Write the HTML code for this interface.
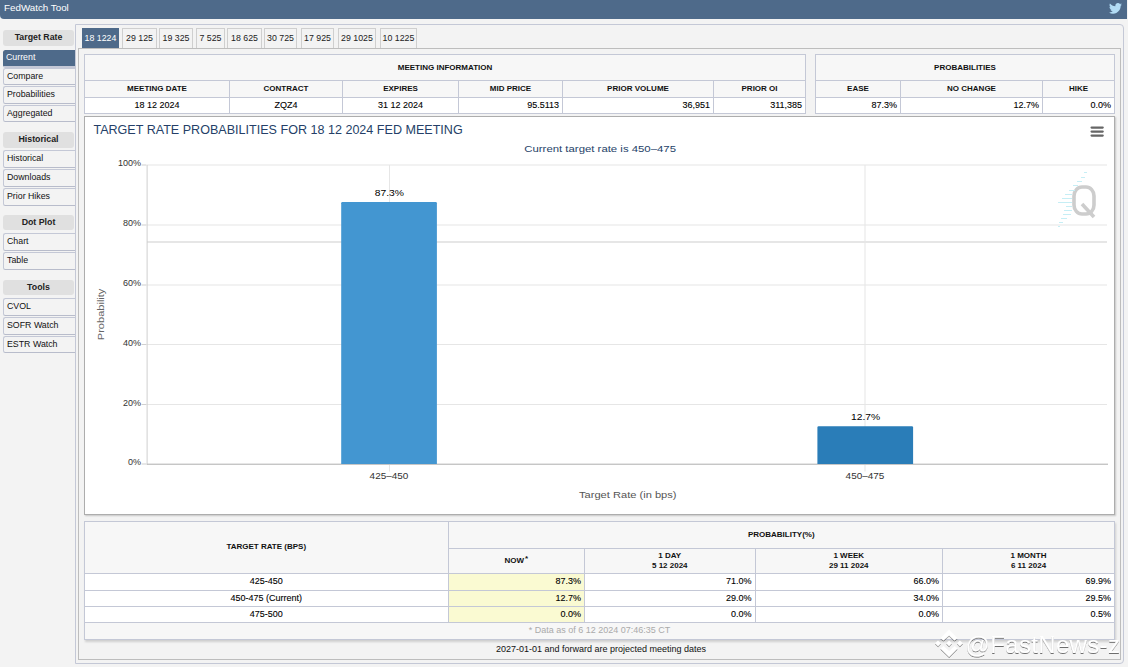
<!DOCTYPE html>
<html><head><meta charset="utf-8">
<style>
*{box-sizing:border-box;margin:0;padding:0}
html,body{width:1128px;height:667px;overflow:hidden;background:#f3f3f3;font-family:"Liberation Sans",sans-serif;color:#111;position:relative}
.a{position:absolute}
#hdr{left:0;top:0;width:1127px;height:19px;background:#4e6a8a;border-radius:0 0 0 4px}
#hdr .t{left:4px;top:1px;font-size:9.8px;color:#fff;line-height:14px}
/* sidebar */
.sh{left:3px;width:71px;height:15.5px;background:#e0e0e0;border-radius:3px;font-size:8.8px;font-weight:bold;color:#222;text-align:center;line-height:14px}
.si{left:3px;width:72px;height:17.5px;background:#f3f3f3;border:1px solid #c4c8d6;border-right:none;border-bottom:1.5px solid #b8bccb;border-radius:2.5px 0 0 2.5px;font-size:8.8px;color:#111;line-height:14px;padding-left:3px}
.si.on{background:#4e6a8a;color:#fff;border-color:#c4c8d6;border-width:0 0 2px 0;height:18.5px;line-height:14.5px}
/* panels */
#outer{left:75px;top:24px;width:1049px;height:640px;border:1px solid #c4c8d6;border-radius:0 4px 4px 0;background:#f3f3f3}
#inner{left:78px;top:48px;width:1043px;height:612px;border:1px solid #bdbdbd;background:#f3f3f3}
.tab{top:27.7px;height:21px;border:1px solid #cfcfcf;border-bottom:none;background:#f3f3f3;font-size:8.8px;color:#222;text-align:center;line-height:18.5px}
.tab.on{background:#4e6a8a;color:#fff;border-color:#4e6a8a}
table{border-collapse:collapse;position:absolute;table-layout:fixed}
td,th{border:1px solid #c4c8d6;font-size:9px;white-space:nowrap;overflow:hidden;padding-bottom:1px}
th{font-size:8px;font-weight:bold;background:#f7f7f7;color:#111}
td{background:#fff;color:#000;-webkit-text-stroke:0.1px #000}
.r{text-align:right;padding-right:3px}
.c{text-align:center}
td.y{background:#fafad2}
sup{font-size:8px;vertical-align:2px;margin-left:1px;line-height:0}
#bt{box-shadow:1px 2px 2px rgba(0,0,0,0.15)}
#chart{left:84px;top:116px;width:1031px;height:399px;background:#fff;border:1px solid #adadad;box-shadow:1px 1px 1.5px rgba(0,0,0,0.18)}
</style></head><body>
<div id="hdr" class="a"><div class="a t">FedWatch Tool</div>
<svg class="a" style="left:1109px;top:3px" width="13" height="11" viewBox="0 0 24 20"><path fill="#b2dcf5" d="M24 2.4c-.9.4-1.8.6-2.8.8 1-.6 1.8-1.6 2.2-2.7-1 .6-2 1-3.1 1.2C19.4.7 18.1 0 16.6 0c-2.7 0-4.9 2.2-4.9 4.9 0 .4 0 .8.1 1.1C7.7 5.8 4.1 3.9 1.7.9c-.4.7-.7 1.6-.7 2.5 0 1.7.9 3.2 2.2 4.1-.8 0-1.6-.2-2.2-.6v.1c0 2.4 1.7 4.4 3.9 4.8-.4.1-.8.2-1.3.2-.3 0-.6 0-.9-.1.6 2 2.4 3.4 4.6 3.4-1.7 1.3-3.8 2.1-6.1 2.1-.4 0-.8 0-1.2-.1 2.2 1.4 4.8 2.2 7.5 2.2 9.1 0 14-7.5 14-14v-.6c1-.7 1.8-1.6 2.5-2.5z"/></svg>
</div>

<div id="outer" class="a"></div>

<!-- sidebar -->
<div class="a sh" style="top:30px">Target Rate</div>
<div class="a si on" style="top:49.5px">Current</div>
<div class="a si" style="top:67.8px">Compare</div>
<div class="a si" style="top:86.3px">Probabilities</div>
<div class="a si" style="top:104.8px">Aggregated</div>

<div class="a sh" style="top:132.2px">Historical</div>
<div class="a si" style="top:150.2px">Historical</div>
<div class="a si" style="top:169px">Downloads</div>
<div class="a si" style="top:188px">Prior Hikes</div>

<div class="a sh" style="top:214.8px">Dot Plot</div>
<div class="a si" style="top:233.3px">Chart</div>
<div class="a si" style="top:252px">Table</div>

<div class="a sh" style="top:279.5px">Tools</div>
<div class="a si" style="top:298.3px">CVOL</div>
<div class="a si" style="top:317px">SOFR Watch</div>
<div class="a si" style="top:335.5px">ESTR Watch</div>

<!-- tabs -->
<div class="a tab on" style="left:82px;width:37px">18 1224</div>
<div class="a tab" style="left:122px;width:35px">29 125</div>
<div class="a tab" style="left:159px;width:34px">19 325</div>
<div class="a tab" style="left:196px;width:29px">7 525</div>
<div class="a tab" style="left:227px;width:35px">18 625</div>
<div class="a tab" style="left:264px;width:33px">30 725</div>
<div class="a tab" style="left:301px;width:33px">17 925</div>
<div class="a tab" style="left:338px;width:38px">29 1025</div>
<div class="a tab" style="left:380px;width:37px">10 1225</div>

<div id="inner" class="a"></div>

<!-- meeting info -->
<table style="left:84px;top:54px;width:722px">
<colgroup><col style="width:145px"><col style="width:113px"><col style="width:116px"><col style="width:104px"><col style="width:151px"><col style="width:92px"></colgroup>
<tr style="height:26px"><th colspan="6">MEETING INFORMATION</th></tr>
<tr style="height:17px"><th>MEETING DATE</th><th>CONTRACT</th><th>EXPIRES</th><th>MID PRICE</th><th>PRIOR VOLUME</th><th>PRIOR OI</th></tr>
<tr style="height:16px"><td class="c">18 12 2024</td><td class="c">ZQZ4</td><td class="c">31 12 2024</td><td class="r">95.5113</td><td class="r">36,951</td><td class="r">311,385</td></tr>
</table>

<table style="left:815px;top:54px;width:299px">
<colgroup><col style="width:85px"><col style="width:142px"><col style="width:72px"></colgroup>
<tr style="height:26px"><th colspan="3">PROBABILITIES</th></tr>
<tr style="height:17px"><th>EASE</th><th>NO CHANGE</th><th>HIKE</th></tr>
<tr style="height:16px"><td class="r">87.3%</td><td class="r">12.7%</td><td class="r">0.0%</td></tr>
</table>

<div id="chart" class="a"></div>
<svg class="a" style="left:0;top:0" width="1128" height="667">
<g font-family="Liberation Sans, sans-serif">
<text x="93.4" y="134" font-size="12.2" fill="#253f68" textLength="369.3" lengthAdjust="spacingAndGlyphs">TARGET RATE PROBABILITIES FOR 18 12 2024 FED MEETING</text>
<path d="M1091.6 127.55H1102.7M1091.6 131.55H1102.7M1091.6 135.55H1102.7" stroke="#666" stroke-width="2.3" stroke-linecap="round"/>
<text x="524.3" y="152" font-size="9.4" fill="#253f68" textLength="151.7" lengthAdjust="spacingAndGlyphs">Current target rate is 450–475</text>
<!-- grid -->
<g fill="#e6e6e6">
<rect x="147" y="164.5" width="960" height="1"/>
<rect x="147" y="224.5" width="960" height="1"/>
<rect x="147" y="284.5" width="960" height="1"/>
<rect x="147" y="344" width="960" height="1"/>
<rect x="147" y="404" width="960" height="1"/>
<rect x="147" y="241" width="960" height="2"/>
<rect x="389" y="165" width="1" height="299"/>
<rect x="864.5" y="165" width="1" height="299"/>
<rect x="864.5" y="465" width="1" height="6.5"/>
<rect x="389" y="465" width="1" height="6.5"/>
</g>
<g fill="#d0d0d0">
<rect x="146.6" y="165" width="1" height="300"/>
<rect x="141.5" y="164.5" width="5" height="1"/>
<rect x="141.5" y="224.5" width="5" height="1"/>
<rect x="141.5" y="284.5" width="5" height="1"/>
<rect x="141.5" y="344" width="5" height="1"/>
<rect x="141.5" y="404" width="5" height="1"/>
<rect x="141.5" y="463.5" width="5" height="1"/>
</g>
<rect x="147" y="463.6" width="961" height="1.3" fill="#c0c0c0"/>
<g font-size="9" fill="#333" text-anchor="end">
<text x="141" y="165.5">100%</text>
<text x="141" y="225.5">80%</text>
<text x="141" y="285.5">60%</text>
<text x="141" y="345.5">40%</text>
<text x="141" y="405.5">20%</text>
<text x="141" y="465">0%</text>
</g>
<text transform="translate(104.2,340.2) rotate(-90)" font-size="9" fill="#666" textLength="51.6" lengthAdjust="spacingAndGlyphs">Probability</text>
<path d="M341.2 464V203.3q0-1.2 1.2-1.2h93.3q1.2 0 1.2 1.2V464z" fill="#4396d1"/>
<path d="M817.4 464V427.4q0-1.2 1.2-1.2h93.3q1.2 0 1.2 1.2V464z" fill="#2a7db8"/>
<g font-size="9.7" fill="#000">
<text x="374.7" y="195.7" textLength="29.2" lengthAdjust="spacingAndGlyphs">87.3%</text>
<text x="851" y="419.5" textLength="29.2" lengthAdjust="spacingAndGlyphs">12.7%</text>
</g>
<g font-size="9.7" fill="#333">
<text x="369.6" y="479" textLength="38.8" lengthAdjust="spacingAndGlyphs">425–450</text>
<text x="845.6" y="479" textLength="38.8" lengthAdjust="spacingAndGlyphs">450–475</text>
</g>
<text x="579" y="497.5" font-size="9" fill="#555" textLength="97.5" lengthAdjust="spacingAndGlyphs">Target Rate (in bps)</text>
<!-- Q logo -->
<g fill="none" stroke="#cdcdcd" stroke-width="3.6">
<rect x="1074" y="187" width="20" height="27" rx="8" ry="9"/>
<path d="M1082 204l12 13"/>
</g>
<g fill="#c6eef5">
<rect x="1084" y="172" width="3" height="1"/>
<rect x="1081" y="177" width="4" height="1"/>
<rect x="1077" y="181" width="5" height="1"/>
<rect x="1073" y="185" width="5" height="1"/>
<rect x="1069" y="190" width="6" height="1"/>
<rect x="1065" y="194" width="7" height="1"/>
<rect x="1062" y="198" width="10" height="1"/>
<rect x="1058" y="202" width="14" height="1"/>
<rect x="1066" y="206" width="6" height="1"/>
<rect x="1064" y="210" width="8" height="1"/>
<rect x="1063" y="214" width="8" height="1"/>
<rect x="1061" y="218" width="6" height="1"/>
<rect x="1059" y="222" width="4" height="1"/>
<rect x="1058" y="226" width="2" height="1"/>
</g>
</g>
</svg>


<!-- bottom table -->
<table id="bt" style="left:84px;top:521px;width:1030px">
<colgroup><col style="width:363.5px"><col style="width:136.5px"><col style="width:170.5px"><col style="width:187.5px"><col style="width:172px"></colgroup>
<tr style="height:26.5px"><th rowspan="2">TARGET RATE (BPS)</th><th colspan="4">PROBABILITY(%)</th></tr>
<tr style="height:25px"><th>NOW<sup>*</sup></th><th style="line-height:10px;padding-top:2px">1 DAY<br>5 12 2024</th><th style="line-height:10px;padding-top:2px">1 WEEK<br>29 11 2024</th><th style="line-height:10px;padding-top:2px">1 MONTH<br>6 11 2024</th></tr>
<tr style="height:17px"><td class="c">425-450</td><td class="r y">87.3%</td><td class="r">71.0%</td><td class="r">66.0%</td><td class="r">69.9%</td></tr>
<tr style="height:16.5px"><td class="c">450-475 (Current)</td><td class="r y">12.7%</td><td class="r">29.0%</td><td class="r">34.0%</td><td class="r">29.5%</td></tr>
<tr style="height:16px"><td class="c">475-500</td><td class="r y">0.0%</td><td class="r">0.0%</td><td class="r">0.0%</td><td class="r">0.5%</td></tr>
<tr style="height:16.5px"><th colspan="5" style="font-weight:normal;font-size:9px;color:#aaa">* Data as of 6 12 2024 07:46:35 CT</th></tr>
</table>
<div class="a" style="left:0;width:1128px;top:643.8px;text-align:center;font-size:9px;color:#111;padding-left:74px">2027-01-01 and forward are projected meeting dates</div>

<!-- watermark -->
<svg class="a" style="left:0;top:0" width="1128" height="667">
<defs><filter id="sh" x="-10%" y="-30%" width="120%" height="160%">
<feGaussianBlur in="SourceAlpha" stdDeviation="0.55" result="b"/>
<feOffset in="b" dx="0.2" dy="0.9" result="o"/>
<feFlood flood-color="#000" flood-opacity="0.55"/><feComposite in2="o" operator="in" result="s"/>
<feMerge><feMergeNode in="s"/><feMergeNode in="SourceGraphic"/></feMerge></filter></defs>
<g filter="url(#sh)" fill="#fff">
<path d="M949.1 629.6L940.4 638.2L943.5 640.6L949.1 635.6L954.4 640.6L957.5 638.2z"/>
<path d="M938 640.5L935 643.3L938.1 646.3L940.9 643.3z"/>
<path d="M949.1 640.5L946.3 643.3L949.1 646.3L951.9 643.3z"/>
<path d="M959.8 640.5L957 643.3L959.8 646.3L962.9 643.3z"/>
<path d="M940.4 648.6L949.1 657L957.5 648.6L954.6 646L949.1 651L943.6 646z"/>
<text x="965.6" y="652.6" font-family="Liberation Sans, sans-serif" font-size="24" letter-spacing="0.33">@FastNews-z</text>
</g>
</svg>
</body></html>
